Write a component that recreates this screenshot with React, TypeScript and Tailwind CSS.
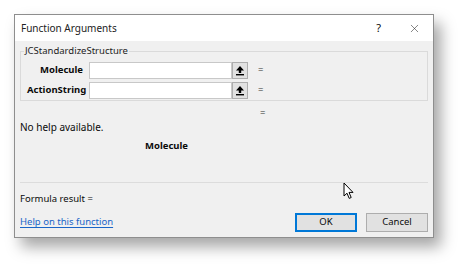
import { X } from "lucide-react";

function UploadButton() {
  return (
    <button
      type="button"
      className="flex h-[17px] w-[16px] items-center justify-center border border-[#adadad] bg-[#e1e1e1]"
    >
      <svg width="10" height="11" viewBox="0 0 10 11">
        <path d="M5 1 L9 5.5 L6.2 5.5 L6.2 8 L3.8 8 L3.8 5.5 L1 5.5 Z" fill="#000" />
        <rect x="1" y="9" width="8" height="1.4" fill="#000" />
      </svg>
    </button>
  );
}

function ArgRow({ label }: { label: string }) {
  return (
    <div className="flex h-[17px] items-center">
      <div className="w-[62px] pr-[6px] text-right font-bold">{label}</div>
      <div className="h-[17px] w-[143px] border border-[#c8c8c8] bg-white" />
      <UploadButton />
      <span className="ml-[10px] text-[#333]">=</span>
    </div>
  );
}

function Cursor() {
  return (
    <svg
      className="absolute left-[343px] top-[182px]"
      width="12"
      height="18"
      viewBox="0 0 12 18"
    >
      <path
        d="M1 1 L1 14 L4 11.2 L6.2 16.4 L8.2 15.5 L6 10.4 L10 10.4 Z"
        fill="#fff"
        stroke="#000"
        strokeWidth="1"
        strokeLinejoin="round"
      />
    </svg>
  );
}

export default function App() {
  return (
    <div
      className="relative h-[278px] w-[474px] bg-white pl-[14px] pt-[14px] text-[9.5px] text-[#0a0a0a]"
      style={{ fontFamily: '"Noto Sans", "Open Sans", sans-serif' }}
    >
      <div className="flex h-[224px] w-[420px] flex-col border border-[#8e8e8e] bg-[#f0f0f0] shadow-[7px_9px_14px_rgba(0,0,0,0.35)]">
        {/* title bar */}
        <div className="flex h-[26px] items-center bg-white pl-[6px] pr-[12px] text-[10px]">
          <span className="flex-1 text-[#222]">Function Arguments</span>
          <span className="mr-[27px] text-[11px]">?</span>
          <X size={13} strokeWidth={1} color="#222" />
        </div>

        <div className="flex flex-1 flex-col px-[5px]">
          <fieldset className="mt-[4px] h-[56px] border border-[#dadada] pl-[3px]">
            <legend className="px-[1px] text-[9.5px] leading-[12px] text-[#222]">
              JCStandardizeStructure
            </legend>
            <div className="mt-[5px] flex flex-col gap-[3px] pl-[3px]">
              <ArgRow label="Molecule" />
              <ArgRow label="ActionString" />
            </div>
          </fieldset>

          <div className="mt-[4px] h-[16px] pl-[240px] leading-[16px] text-[#333]">=</div>
          <div className="-mt-[1px] text-[10px] leading-[14px]">No help available.</div>
          <div className="mt-[5px] pl-[125px] font-bold leading-[14px]">Molecule</div>

          <div className="mt-[29px] border-t border-[#dcdcdc]" />

          <div className="mt-[9px] leading-[14px]">Formula result =</div>

          <div className="mt-[7px] flex items-center">
            <a href="#" className="flex-1 text-[#1a65c8] underline underline-offset-2">
              Help on this function
            </a>
            <button
              type="button"
              className="h-[19px] w-[62px] border-2 border-[#0078d7] bg-[#e1e1e1] text-[9.5px]"
            >
              OK
            </button>
            <button
              type="button"
              className="ml-[9px] h-[19px] w-[62px] border border-[#adadad] bg-[#e1e1e1] text-[9.5px]"
            >
              Cancel
            </button>
          </div>
        </div>
      </div>
      <Cursor />
    </div>
  );
}
